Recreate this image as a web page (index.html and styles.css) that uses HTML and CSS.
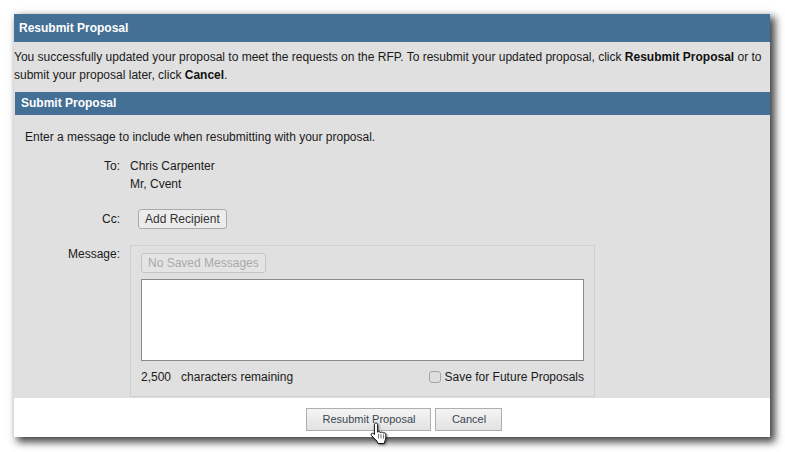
FILE: index.html
```html
<!DOCTYPE html>
<html lang="en">
<head>
  <meta charset="UTF-8" />
  <title>Resubmit Proposal</title>
  <link rel="stylesheet" href="styles.css">
</head>
<body>
  <div class="dialog">
    <div class="dialog-title">Resubmit Proposal</div>
    <div class="dialog-body">
      <p class="intro">You successfully updated your proposal to meet the requests on the RFP. To resubmit your updated proposal, click <b>Resubmit Proposal</b> or to submit your proposal later, click <b>Cancel</b>.</p>
      <div class="section-title">Submit Proposal</div>
      <p class="hint">Enter a message to include when resubmitting with your proposal.</p>

      <div class="row row-to">
        <div class="label">To:</div>
        <div class="recipient">Chris Carpenter<br>Mr, Cvent</div>
      </div>
      <div class="row row-cc">
        <div class="label">Cc:</div>
        <button class="btn add-btn">Add Recipient</button>
      </div>
      <div class="row">
        <div class="label">Message:</div>
        <div class="message-box">
          <button class="btn saved-btn" disabled>No Saved Messages</button>
          <div class="message-input"></div>
          <div class="message-foot">
            <span class="count">2,500</span>
            <span>characters remaining</span>
            <label class="save-opt"><span class="check"></span>Save for Future Proposals</label>
          </div>
        </div>
      </div>
    </div>
    <div class="dialog-foot">
      <button class="action-btn resubmit">Resubmit Proposal</button>
      <button class="action-btn cancel">Cancel</button>
      <svg class="cursor" width="20" height="26" viewBox="0 0 20 26">
        <path d="M6 1c1 0 1.600.7 1.600 1.700v7.500c.6-.8 2.400-.8 2.800.4.6-.8 2.400-.7 2.800.5.8-.6 2.400-.2 2.600 1.100.2 2.400 0 4.500-.8 6.600l-.8 2.700H8l-1.200-2.500-5-5.200c-.9-1-.8-1.900-.2-2.300.8-.5 1.800-.1 2.700.9l.1.100V2.700C4.400 1.700 5 1 6 1z" fill="#fff" stroke="#111" stroke-width="1" stroke-linejoin="round"/>
        <path d="M8.500 12v4.500M11 12v4.500M13.500 12.500v4" fill="none" stroke="#333" stroke-width="0.700"/>
      </svg>
    </div>
  </div>
</body>
</html>
```
FILE: styles.css
```css
:root {
  --blue: #447096;
  --panel: #e0e0e0;
  --text: #1a1a1a;
}

body {
  margin: 0;
  min-height: 452px;
  box-sizing: border-box;
  padding: 14px 15px 0 14px;
  background: #fff;
  font-family: "Liberation Sans", Arial, sans-serif;
  font-size: 12px;
  line-height: 18px;
  color: var(--text);
}

.dialog {
  background: var(--panel);
  box-shadow: 4px 4px 8px 1px rgba(0, 0, 0, 0.75);
}

.dialog-title {
  height: 28px;
  padding-left: 5px;
  background: var(--blue);
  color: #fff;
  font-weight: bold;
  line-height: 28px;
}

.dialog-body {
  height: 356px;
  overflow: hidden;
}

.intro {
  margin: 6px 0 8px;
}

.intro b {
  color: #111;
}

.section-title {
  height: 23px;
  margin-left: 1px;
  padding-left: 6px;
  background: var(--blue);
  color: #fff;
  font-weight: bold;
  line-height: 23px;
}

.hint {
  margin: 13px 0 11px 11px;
}

.row {
  display: flex;
  align-items: flex-start;
}

.row-to {
  margin-bottom: 16px;
}

.row-cc {
  margin-bottom: 16px;
  align-items: center;
}

.label {
  width: 106px;
  text-align: right;
  flex-shrink: 0;
}

.recipient {
  margin-left: 10px;
}

.btn {
  height: 20px;
  padding: 0 6px;
  border: 1px solid #aaa;
  border-radius: 3px;
  background: #ececec;
  font: inherit;
  color: #333;
}

.add-btn {
  margin-left: 18px;
}

.message-box {
  width: 443px;
  height: 143px;
  margin-left: 10px;
  padding: 7px 10px 0 10px;
  border: 1px solid #cfcfcf;
}

.saved-btn {
  display: block;
  color: #a9a9a9;
  border-color: #c4c4c4;
  background: #e4e4e4;
}

.message-input {
  height: 80px;
  margin-top: 6px;
  background: #fff;
  border: 1px solid #8a8a8a;
}

.message-foot {
  display: flex;
  align-items: center;
  margin-top: 7px;
}

.count {
  margin-right: 10px;
}

.save-opt {
  display: flex;
  align-items: center;
  margin-left: auto;
}

.check {
  width: 10px;
  height: 10px;
  margin-right: 4px;
  border: 1px solid #a5a5a5;
  border-radius: 3px;
  background: #dedede;
}

.dialog-foot {
  position: relative;
  display: flex;
  justify-content: center;
  gap: 4px;
  height: 39px;
  padding: 10px 0 0 24px;
  box-sizing: border-box;
  background: #fff;
}

.action-btn {
  height: 23px;
  padding: 0 0 2px 1px;
  border: 1px solid #aeaeae;
  background: linear-gradient(#f4f4f4, #e2e2e2);
  font-family: inherit;
  font-size: 11px;
  color: #3b4652;
}

.resubmit {
  width: 125px;
}

.cancel {
  width: 67px;
}

.cursor {
  position: absolute;
  left: 356px;
  top: 24px;
  filter: drop-shadow(1px 1px 1px rgba(0, 0, 0, 0.5));
}
```
